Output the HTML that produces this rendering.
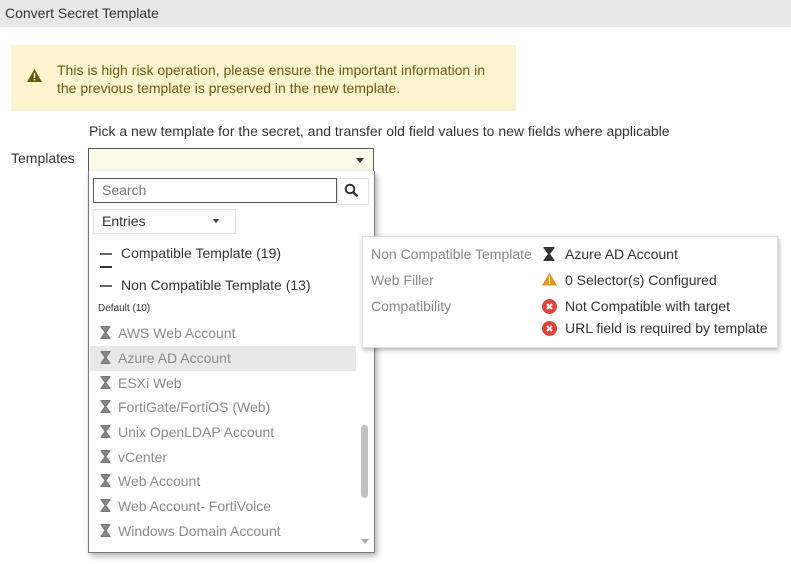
<!DOCTYPE html><html><head><style>
body{margin:0;width:791px;height:564px;background:#fff;font-family:"Liberation Sans",sans-serif;position:relative;overflow:hidden;color:#333}
.a{position:absolute;white-space:nowrap}
.hg{display:inline-block;width:11px;height:13px;vertical-align:-1px;margin-right:7px}
.it{left:100px;font-size:14px;color:#8a8a8a}
.tl{font-size:14px;color:#888}
.tv{font-size:14px;color:#333}
</style></head><body>
<div class="a" style="left:0;top:0;width:791px;height:27px;background:#e7e7e7"></div>
<div class="a" style="left:5px;top:5px;font-size:14px;color:#333">Convert Secret Template</div>
<div class="a" style="left:11px;top:45px;width:505px;height:66px;background:#fcf3cf"></div>
<svg class="a" style="left:27px;top:69px" width="15" height="13" viewBox="0 0 15 13"><path d="M7.5 0L15 13H0Z" fill="#6b5a12"/><rect x="6.8" y="4" width="1.4" height="5" fill="#fcf3cf"/><rect x="6.8" y="10" width="1.4" height="1.4" fill="#fcf3cf"/></svg>
<div class="a" style="left:57px;top:61px;font-size:14px;line-height:18px;color:#6b5a12">This is high risk operation, please ensure the important information in<br>the previous template is preserved in the new template.</div>
<div class="a" style="left:89px;top:123px;font-size:14px">Pick a new template for the secret, and transfer old field values to new fields where applicable</div>
<div class="a" style="left:11px;top:150px;font-size:14px">Templates</div>
<div class="a" style="left:88px;top:148px;width:284px;height:22px;border:1px solid #555;background:#fcfbe8"></div>
<div class="a" style="left:356px;top:158px;width:0;height:0;border-left:4px solid transparent;border-right:4px solid transparent;border-top:5px solid #333"></div>
<div class="a" style="left:88px;top:171px;width:285px;height:381px;border:1px solid #777;border-top:none;background:#fff;box-shadow:2px 3px 6px rgba(0,0,0,.3)"></div>
<div class="a" style="left:93px;top:178px;width:242px;height:23px;border:1px solid #555;background:#fff"></div>
<div class="a" style="left:102px;top:182px;font-size:14px;color:#777">Search</div>
<div class="a" style="left:337px;top:178px;width:30px;height:25px;border:1px solid #e3e3e3;background:#fff"></div>
<svg class="a" style="left:344px;top:183px" width="15" height="15" viewBox="0 0 15 15"><circle cx="6" cy="6" r="4.3" stroke="#333" stroke-width="2" fill="none"/><path d="M9 9L13.5 13.5" stroke="#333" stroke-width="2.4"/></svg>
<div class="a" style="left:93px;top:209px;width:141px;height:23px;border:1px solid #e3e3e3"></div>
<div class="a" style="left:102px;top:213px;font-size:14px">Entries</div>
<div class="a" style="left:213px;top:219px;border-left:3px solid transparent;border-right:3px solid transparent;border-top:4px solid #333"></div>
<div class="a" style="left:100px;top:253px;width:12px;height:2px;background:#666"></div>
<div class="a" style="left:121px;top:245px;font-size:14px">Compatible Template&nbsp;(19)</div>
<div class="a" style="left:100px;top:266px;width:12px;height:2px;background:#333"></div>
<div class="a" style="left:100px;top:285px;width:12px;height:2px;background:#666"></div>
<div class="a" style="left:121px;top:277px;font-size:14px">Non Compatible Template&nbsp;(13)</div>
<div class="a" style="left:98px;top:303px;font-size:10px">Default (10)</div>
<div class="a" style="left:90px;top:346px;width:266px;height:25px;background:#e8e8e8"></div>
<svg width="0" height="0" style="position:absolute"><defs><symbol id="h" viewBox="0 0 11 13"><path d="M0.5 0.5H10.5M0.5 12.5H10.5M1.5 1L9.5 12M9.5 1L1.5 12" stroke="#777" stroke-width="1.6" fill="none"/><path d="M2 1H9L5.5 6Z M5.5 7L9 12H2Z" fill="#888"/></symbol></defs></svg>
<div class="a it" style="top:325px"><svg class="hg"><use href="#h"/></svg>AWS Web Account</div>
<div class="a it" style="top:350px"><svg class="hg"><use href="#h"/></svg>Azure AD Account</div>
<div class="a it" style="top:375px"><svg class="hg"><use href="#h"/></svg>ESXi Web</div>
<div class="a it" style="top:399px"><svg class="hg"><use href="#h"/></svg>FortiGate/FortiOS (Web)</div>
<div class="a it" style="top:424px"><svg class="hg"><use href="#h"/></svg>Unix OpenLDAP Account</div>
<div class="a it" style="top:449px"><svg class="hg"><use href="#h"/></svg>vCenter</div>
<div class="a it" style="top:473px"><svg class="hg"><use href="#h"/></svg>Web Account</div>
<div class="a it" style="top:498px"><svg class="hg"><use href="#h"/></svg>Web Account- FortiVoice</div>
<div class="a it" style="top:523px"><svg class="hg"><use href="#h"/></svg>Windows Domain Account</div>
<div class="a" style="left:361px;top:425px;width:7px;height:73px;border-radius:4px;background:#c1c1c1"></div>
<div class="a" style="left:361px;top:539px;border-left:4px solid transparent;border-right:4px solid transparent;border-top:5px solid #aaa"></div>
<div class="a" style="left:362px;top:236px;width:414px;height:110px;background:#fff;border:1px solid #ddd;box-shadow:1px 2px 5px rgba(0,0,0,.3)"></div>
<div class="a tl" style="left:371px;top:246px">Non Compatible Template</div>
<div class="a tl" style="left:371px;top:272px">Web Filler</div>
<div class="a tl" style="left:371px;top:298px">Compatibility</div>
<svg class="a" style="left:543px;top:247px" width="12" height="14" viewBox="0 0 11 13"><path d="M0.5 0.5H10.5M0.5 12.5H10.5M1.5 1L9.5 12M9.5 1L1.5 12" stroke="#333" stroke-width="1.6" fill="none"/><path d="M2 1H9L5.5 6Z M5.5 7L9 12H2Z" fill="#333"/></svg>
<div class="a tv" style="left:565px;top:246px">Azure AD Account</div>
<svg class="a" style="left:542px;top:272px" width="15" height="14" viewBox="0 0 15 13"><path d="M7.5 0L15 13H0Z" fill="#e9941b"/><rect x="6.8" y="4" width="1.4" height="5" fill="#fff"/><rect x="6.8" y="10" width="1.4" height="1.4" fill="#fff"/></svg>
<div class="a tv" style="left:565px;top:272px">0 Selector(s) Configured</div>
<svg class="a" style="left:542px;top:299px" width="15" height="15" viewBox="0 0 15 15"><circle cx="7.5" cy="7.5" r="7.5" fill="#d9453d"/><path d="M5 5L10 10M10 5L5 10" stroke="#fff" stroke-width="2"/></svg>
<div class="a tv" style="left:565px;top:298px">Not Compatible with target</div>
<svg class="a" style="left:542px;top:321px" width="15" height="15" viewBox="0 0 15 15"><circle cx="7.5" cy="7.5" r="7.5" fill="#d9453d"/><path d="M5 5L10 10M10 5L5 10" stroke="#fff" stroke-width="2"/></svg>
<div class="a tv" style="left:565px;top:320px">URL field is required by template</div>
</body></html>
